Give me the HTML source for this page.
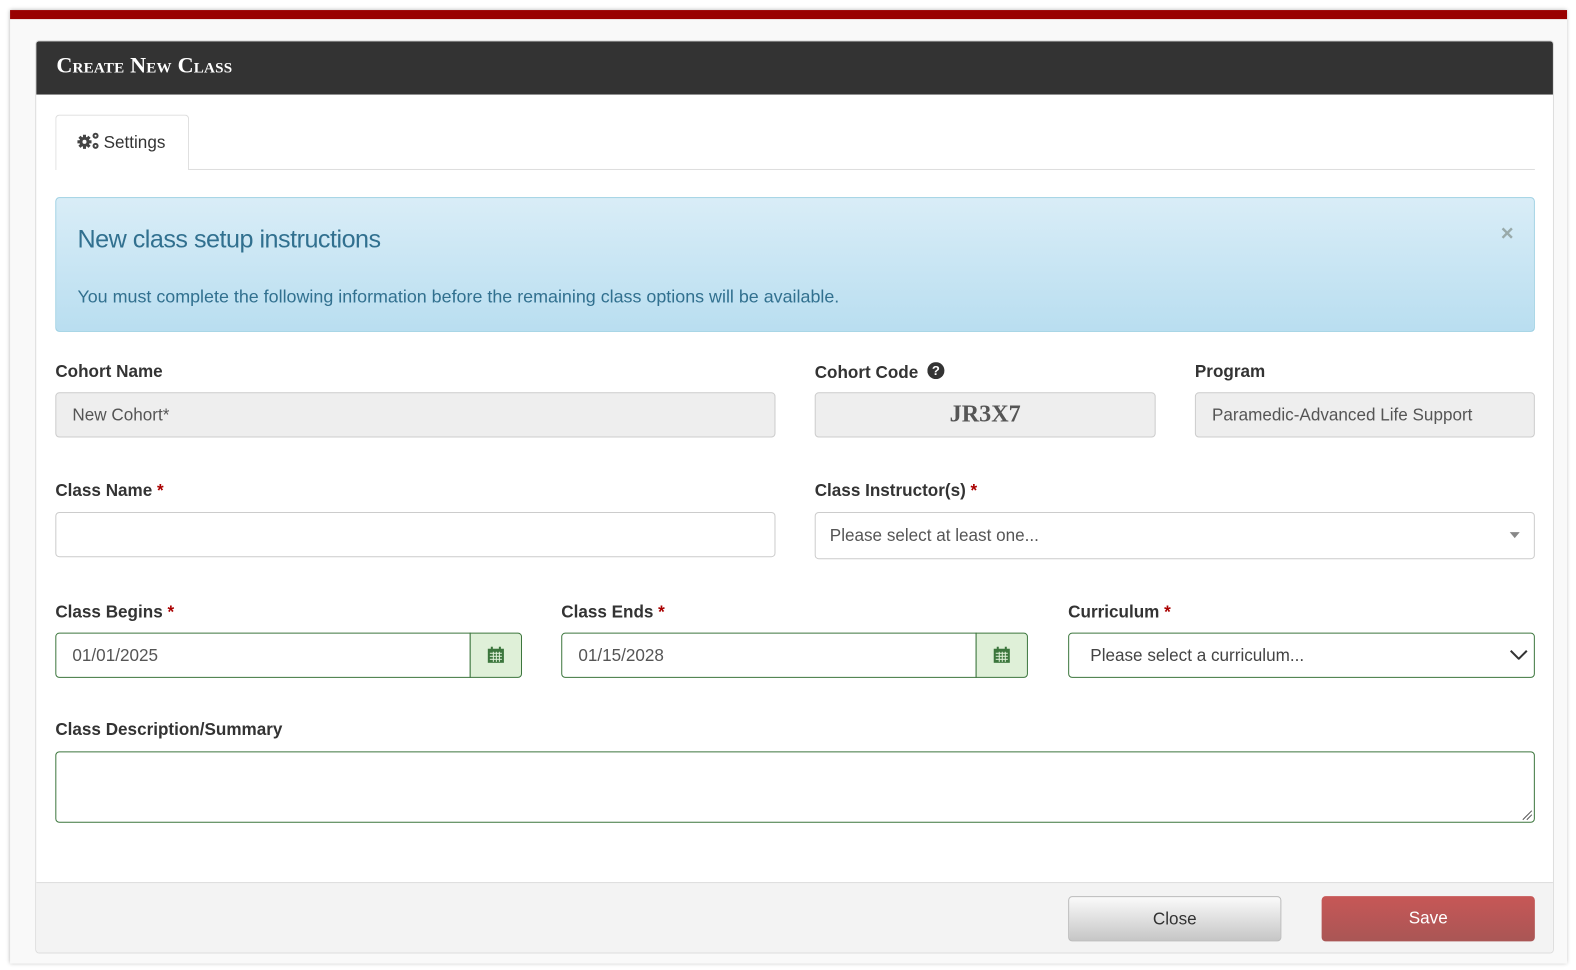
<!DOCTYPE html>
<html><head><meta charset="utf-8"><style>
*{box-sizing:border-box;margin:0;padding:0}
html{overflow:hidden}
body{width:1576px;height:970px;background:#fff;font-family:"Liberation Sans",sans-serif;position:relative;overflow:hidden}
#w{position:absolute;left:0;top:0;width:1576px;height:970px;transform:scale(1.0058);transform-origin:0 0}
.frame{position:absolute;left:10px;top:10px;width:1548px;height:948px;background:#f9f9f9;border-top:9px solid #990000;box-shadow:0 0 4px rgba(0,0,0,.3)}
.panel{position:absolute;left:35px;top:40px;width:1510px;height:908px;background:#fff;border:1px solid #ddd;border-radius:4px;overflow:hidden}
.hdr{height:53px;background:#333;color:#fff;font-family:"Liberation Serif",serif;font-weight:bold;font-size:22px;padding:11px 20px;font-variant:small-caps;letter-spacing:.2px}
.abs{position:absolute}
.tab{left:19px;top:73px;width:133px;height:55px;border:1px solid #ddd;border-bottom:none;border-radius:4px 4px 0 0;background:#fff;font-size:17px;color:#333;padding:16px 0 0 20px}
.tabline{left:152px;top:127px;width:1338px;border-top:1px solid #ddd}
.alert{left:19px;top:155px;width:1471px;height:134px;border:1px solid #9dd0e3;border-radius:4px;background:linear-gradient(#d9edf7,#b9def0);color:#31708f}
.alert h2{font-weight:normal;font-size:25px;position:absolute;left:21px;top:27px;letter-spacing:-.5px}
.alert p{position:absolute;left:21px;top:88px;font-size:17.8px}
.alert .x{position:absolute;right:20px;top:22px;font-size:22px;color:#9aa;font-weight:bold}
label{position:absolute;font-weight:bold;font-size:17px;color:#333}
label b{color:#a00}
.in{position:absolute;height:45px;border:1px solid #ccc;border-radius:4px;background:#fff;font-size:17px;color:#555;padding:12px 16px}
.ro{background:#eee}
.g{border-color:#3c763d}
.cal{position:absolute;width:52px;height:45px;border:1px solid #3c763d;border-radius:0 4px 4px 0;background:#dff0d8}
.foot{position:absolute;left:0;top:836px;width:1510px;height:72px;background:#f3f3f3;border-top:1px solid #ddd}
.btn{position:absolute;top:13px;width:212px;height:45px;border-radius:4px;font-size:17px;text-align:center;padding-top:12px}
</style></head><body><div id="w">
<div class="frame"></div>
<div class="panel">
<div class="hdr">Create New Class</div>
<div class="abs tab"><svg width="24" height="18" viewBox="0 0 24 18" style="vertical-align:-2px;margin-right:3px"><g fill="#444"><circle cx="8" cy="10" r="5"/><g stroke="#444" stroke-width="3"><line x1="8" y1="3" x2="8" y2="17"/><line x1="1" y1="10" x2="15" y2="10"/><line x1="3" y1="5" x2="13" y2="15"/><line x1="13" y1="5" x2="3" y2="15"/></g><circle cx="8" cy="10" r="2" fill="#fff"/><circle cx="19" cy="4" r="3"/><circle cx="19" cy="14" r="3"/><circle cx="19" cy="4" r="1" fill="#fff"/><circle cx="19" cy="14" r="1" fill="#fff"/></g></svg>Settings</div>
<div class="abs tabline"></div>
<div class="abs alert"><h2>New class setup instructions</h2><p>You must complete the following information before the remaining class options will be available.</p><span class="x">×</span></div>

<label style="left:19px;top:319px">Cohort Name</label>
<label style="left:774px;top:319px">Cohort Code <svg width="17" height="17" viewBox="0 0 17 17" style="vertical-align:-1px;margin-left:4px"><circle cx="8.5" cy="8.5" r="8.5" fill="#333"/><text x="8.5" y="13" text-anchor="middle" font-size="13" font-weight="bold" fill="#fff" font-family="Liberation Sans">?</text></svg></label>
<label style="left:1152px;top:319px">Program</label>
<div class="in ro" style="left:19px;top:349px;width:716px">New Cohort*</div>
<div class="in ro" style="left:774px;top:349px;width:339px;text-align:center;font-family:'Liberation Serif',serif;font-weight:bold;font-size:24px;padding-top:8px">JR3X7</div>
<div class="in ro" style="left:1152px;top:349px;width:338px">Paramedic-Advanced Life Support</div>

<label style="left:19px;top:437px">Class Name <b>*</b></label>
<label style="left:774px;top:437px">Class Instructor(s) <b>*</b></label>
<div class="in" style="left:19px;top:468px;width:716px"></div>
<div class="in" style="left:774px;top:468px;width:716px;height:47px;padding-left:14px;padding-top:13px">Please select at least one...<span style="position:absolute;right:14px;top:19px;border:5px solid transparent;border-top:6px solid #888"></span></div>

<label style="left:19px;top:558px">Class Begins <b>*</b></label>
<label style="left:522px;top:558px">Class Ends <b>*</b></label>
<label style="left:1026px;top:558px">Curriculum <b>*</b></label>
<div class="in g" style="left:19px;top:588px;width:413px;border-radius:4px 0 0 4px">01/01/2025</div>
<div class="cal" style="left:431px;top:588px"><svg width="18" height="18" viewBox="0 0 18 18" style="margin:12px 0 0 16px"><rect x="1" y="3" width="16" height="14" fill="#3c763d"/><rect x="4" y="1" width="2" height="4" fill="#3c763d"/><rect x="12" y="1" width="2" height="4" fill="#3c763d"/><g fill="#dff0d8"><rect x="3" y="7" width="12" height="1"/><rect x="3" y="10" width="12" height="1"/><rect x="3" y="13" width="12" height="1"/><rect x="6" y="6" width="1" height="10"/><rect x="9" y="6" width="1" height="10"/><rect x="12" y="6" width="1" height="10"/></g></svg></div>
<div class="in g" style="left:522px;top:588px;width:413px;border-radius:4px 0 0 4px">01/15/2028</div>
<div class="cal" style="left:934px;top:588px"><svg width="18" height="18" viewBox="0 0 18 18" style="margin:12px 0 0 16px"><rect x="1" y="3" width="16" height="14" fill="#3c763d"/><rect x="4" y="1" width="2" height="4" fill="#3c763d"/><rect x="12" y="1" width="2" height="4" fill="#3c763d"/><g fill="#dff0d8"><rect x="3" y="7" width="12" height="1"/><rect x="3" y="10" width="12" height="1"/><rect x="3" y="13" width="12" height="1"/><rect x="6" y="6" width="1" height="10"/><rect x="9" y="6" width="1" height="10"/><rect x="12" y="6" width="1" height="10"/></g></svg></div>
<div class="in g" style="left:1026px;top:588px;width:464px;padding-left:21px;color:#444">Please select a curriculum...<svg width="18" height="10" viewBox="0 0 18 10" style="position:absolute;right:6px;top:16px"><path d="M1 1 L9 9 L17 1" fill="none" stroke="#333" stroke-width="2"/></svg></div>

<label style="left:19px;top:675px">Class Description/Summary</label>
<div class="in g" style="left:19px;top:706px;width:1471px;height:71px"><svg width="12" height="12" style="position:absolute;right:1px;bottom:1px"><path d="M11 2 L2 11 M11 6 L6 11" stroke="#555" stroke-width="1"/></svg></div>

<div class="foot">
<div class="btn" style="left:1026px;border:1px solid #bbb;background:linear-gradient(#fafafa,#c6c6c6);color:#333">Close</div>
<div class="btn" style="left:1278px;background:linear-gradient(#c75756,#a95655);color:#fff">Save</div>
</div>
</div>
</div></body></html>
